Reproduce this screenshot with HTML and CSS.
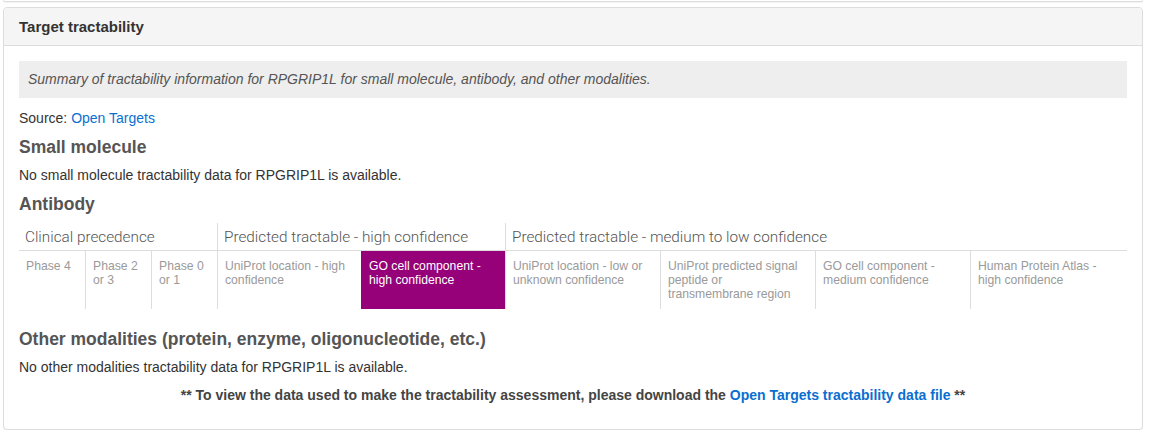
FILE: index.html
```html
<!DOCTYPE html>
<html>
<head>
<meta charset="utf-8">
<link rel="stylesheet" href="styles.css">
</head>
<body>
<div class="prev-panel"></div>
<div class="panel">
  <div class="panel-heading">Target tractability</div>
  <div class="panel-body">
    <div class="summary">Summary of tractability information for RPGRIP1L for small molecule, antibody, and other modalities.</div>
    <p class="source">Source: <a href="#">Open Targets</a></p>
    <h4>Small molecule</h4>
    <p>No small molecule tractability data for RPGRIP1L is available.</p>
    <h4>Antibody</h4>
    <div class="tract-grid">
      <div class="group first span3">Clinical precedence</div>
      <div class="group span2">Predicted tractable - high confidence</div>
      <div class="group span4">Predicted tractable - medium to low confidence</div>
      <div class="cell first">Phase 4</div>
      <div class="cell">Phase 2 or 3</div>
      <div class="cell">Phase 0 or 1</div>
      <div class="cell">UniProt location - high confidence</div>
      <div class="cell active">GO cell component - high confidence</div>
      <div class="cell">UniProt location - low or unknown confidence</div>
      <div class="cell">UniProt predicted signal peptide or transmembrane region</div>
      <div class="cell">GO cell component - medium confidence</div>
      <div class="cell">Human Protein Atlas - high confidence</div>
    </div>
    <h4>Other modalities (protein, enzyme, oligonucleotide, etc.)</h4>
    <p>No other modalities tractability data for RPGRIP1L is available.</p>
    <p class="footer-note">** To view the data used to make the tractability assessment, please download the <a href="#">Open Targets tractability data file</a> **</p>
  </div>
</div>
</body>
</html>
```
FILE: styles.css
```css
html, body {
  margin: 0;
  padding: 0;
  background: #fff;
}
body {
  padding: 0 8px 0 3px;
  font-family: "Liberation Sans", Arial, Helvetica, sans-serif;
  font-size: 14px;
  line-height: 20px;
  color: #333;
}
a {
  color: #0a6fd0;
  text-decoration: none;
}
.prev-panel {
  height: 1px;
  border: 1px solid #ddd;
  border-top: none;
  border-radius: 0 0 4px 4px;
  box-shadow: 0 1px 1px rgba(0, 0, 0, 0.05);
  margin-bottom: 5px;
}
.panel {
  border: 1px solid #ddd;
  border-radius: 4px;
  box-shadow: 0 1px 1px rgba(0, 0, 0, 0.05);
  background: #fff;
}
.panel-heading {
  background: #f5f5f5;
  border-bottom: 1px solid #ddd;
  border-radius: 3px 3px 0 0;
  padding: 10px 15px;
  font-size: 15px;
  line-height: 17px;
  font-weight: bold;
  color: #333;
}
.panel-body {
  padding: 15px 15px 15px 15px;
}
.summary {
  background: #eee;
  padding: 10px 9px;
  line-height: 17px;
  font-style: italic;
  color: #555;
}
p {
  margin: 0;
}
.source {
  margin-top: 10px;
}
h4 {
  font-size: 17.5px;
  line-height: 19px;
  font-weight: bold;
  color: #555;
  margin: 10px 0 8px;
}
.tract-grid {
  display: grid;
  grid-template-columns: 66px 66px 66px 144px 144px 155px 155px 155px 1fr;
  margin: 9px 0 21px;
}
.group {
  font-family: Roboto, "Liberation Sans", sans-serif;
  font-weight: 300;
  font-size: 15.3px;
  line-height: 20px;
  color: #555;
  padding: 4px 6px 3px;
  border-left: 1px solid #ddd;
  border-bottom: 1px solid #ddd;
}
.group.first {
  border-left: none;
}
.span3 { grid-column: span 3; }
.span2 { grid-column: span 2; }
.span4 { grid-column: span 4; }
.cell {
  font-size: 12.2px;
  line-height: 14px;
  color: #9a9a9a;
  padding: 8px 7px;
  height: 58px;
  box-sizing: border-box;
  border-left: 1px solid #ddd;
}
.cell.first {
  border-left: none;
}
.cell.active {
  background: #960078;
  color: #fff;
  border-left: none;
  padding-left: 8px;
}
.footer-note {
  margin: 8px 0 9px;
  text-align: center;
  font-weight: bold;
  color: #444;
}
```
